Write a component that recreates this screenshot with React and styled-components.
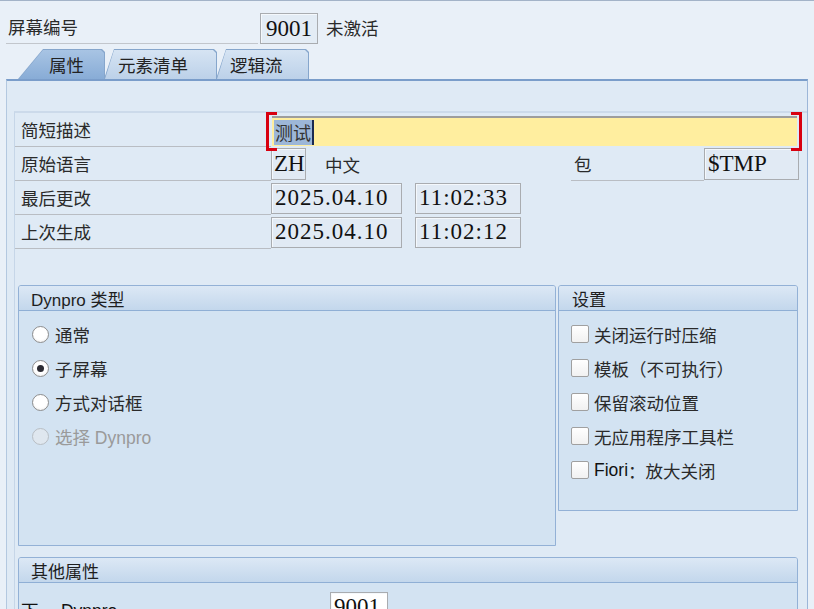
import React from "react";
import styled, { createGlobalStyle } from "styled-components";

const GlobalStyle = createGlobalStyle`
    body {
        margin: 0;
        background: #e9f0f8;
    }
`;

const Screen = styled.div`
    width: 814px;
    height: 609px;
    overflow: hidden;
    box-sizing: border-box;
    background: #e9f0f8;
    border-top: 1px solid #a3b3c8;
    font-family: "Liberation Sans", "Noto Sans CJK SC", sans-serif;
    font-size: 17.5px;
    color: #2a2a2a;
`;

const TopRow = styled.div`
    display: flex;
    align-items: flex-end;
    margin: 12px 0 0 6px;
    height: 31px;
`;

const TopLabel = styled.div`
    width: 250px;
    height: 30px;
    line-height: 30px;
    padding-left: 2px;
    border-bottom: 1px solid #c2c6cc;
`;

const Field = styled.div`
    box-sizing: border-box;
    height: ${(p) => p.h || 31}px;
    width: ${(p) => p.w}px;
    padding: 0 ${(p) => (p.tight ? 2 : 3)}px;
    display: flex;
    align-items: center;
    justify-content: ${(p) => (p.center ? "center" : "flex-start")};
    font-family: "Liberation Serif", serif;
    font-size: 23px;
    letter-spacing: ${(p) => (p.spaced ? "1px" : "0")};
    color: #111;
    background: ${(p) => p.bg || "#e1eaf4"};
    border: 1px solid #a9acb0;
    box-shadow: inset 1px 1px 0 #f4f8fc;
    margin-left: ${(p) => p.ml || 0}px;
    white-space: nowrap;
    overflow: hidden;
`;

const Status = styled.span`
    margin-left: 8px;
    line-height: 30px;
`;

const TabStrip = styled.div`
    display: flex;
    margin: 5px 0 0 18px;
    height: 30px;
`;

const Tab = styled.div`
    position: relative;
    width: ${(p) => p.w}px;
    margin-left: ${(p) => p.ml || 0}px;
    height: 30px;
    background: #86a6cc;
    clip-path: polygon(0 100%, ${(p) => p.slant}px 0, calc(100% - 3px) 0, 100% 3px, 100% 100%);
    z-index: ${(p) => (p.active ? 2 : 1)};
`;

const TabFace = styled.div`
    position: absolute;
    inset: 1px 1px 0 1px;
    clip-path: polygon(0 100%, ${(p) => p.slant - 1}px 0, calc(100% - 3px) 0, 100% 3px, 100% 100%);
    background: ${(p) =>
        p.active
            ? "linear-gradient(#a8c4e4, #88acd6)"
            : "linear-gradient(#d6e4f3, #bcd1e9)"};
    display: flex;
    align-items: center;
    padding-left: ${(p) => p.pad}px;
    font-size: 17.5px;
    color: #222;
`;

const Panel = styled.div`
    margin: 0 6px;
    height: 540px;
    border-top: 2px solid #7a9dca;
    border-left: 1px solid #b3c8e0;
    border-right: 1px solid #9cb6d8;
    background: #dfeaf5;
    padding: 30px 0 0 7px;
    box-sizing: border-box;
`;

const Content = styled.div`
    border-top: 2px solid #ccdaea;
    border-left: 1px solid #c6d6e8;
    height: 100%;
    padding-right: 8px;
`;

const FormRow = styled.div`
    display: grid;
    grid-template-columns: 256px 1fr;
    height: 34px;
`;

const RowLabel = styled.div`
    padding-left: 6px;
    display: flex;
    align-items: center;
    border-bottom: 1px solid #b9bdc3;
`;

const RowValue = styled.div`
    display: flex;
    align-items: center;
`;

const Required = styled.div`
    position: relative;
    flex: 1;
    height: 30px;
    margin: 2px 2px 0 1px;
    background: #ffee9f;
    border-top: 2px solid #9d9d9d;
    box-sizing: border-box;
    display: flex;
    align-items: center;
    padding-left: 2px;
`;

const Bracket = styled.span`
    position: absolute;
    top: -6px;
    bottom: -5px;
    width: 8px;
    border: 3px solid #d8000f;
    ${(p) => (p.side === "left" ? "left: -6px; border-right: none;" : "right: -5px; border-left: none;")}
`;

const Selected = styled.span`
    background: #9db7d8;
    font-family: "Noto Sans CJK SC", sans-serif;
    font-size: 18px;
    line-height: 25px;
    color: #333;
    padding: 0 1px;
    border-right: 2px solid #1a2a50;
`;

const Plain = styled.span`
    margin-left: ${(p) => p.ml || 0}px;
`;

const PackageLabel = styled.div`
    margin-left: auto;
    width: 130px;
    height: 32px;
    padding-left: 3px;
    display: flex;
    align-items: center;
    border-bottom: 1px solid #b9bdc3;
`;

const GroupRow = styled.div`
    display: flex;
    align-items: flex-start;
    gap: 2px;
    margin: 36px 0 0 3px;
`;

const Group = styled.div`
    box-sizing: border-box;
    width: ${(p) => p.w}px;
    height: ${(p) => p.h}px;
    border: 1px solid #93b1d6;
    border-radius: 3px 3px 0 0;
    background: #d3e3f2;
    margin-top: ${(p) => p.mt || 0}px;
    margin-left: ${(p) => p.ml || 0}px;
    overflow: hidden;
`;

const GroupHeader = styled.div`
    height: 24px;
    display: flex;
    align-items: center;
    padding-left: ${(p) => p.pad || 12}px;
    background: linear-gradient(#dce8f5, #c3d7ec);
    border-bottom: 1px solid #8fafd5;
    color: #1e1e1e;
    font-size: 17px;
`;

const GroupBody = styled.div`
    padding: 6px 0 0 ${(p) => p.pad}px;
`;

const Option = styled.div`
    height: 34px;
    display: flex;
    align-items: center;
    color: ${(p) => (p.disabled ? "#9a9a9a" : "#2a2a2a")};
`;

const Radio = styled.span`
    box-sizing: border-box;
    width: 17px;
    height: 17px;
    border-radius: 50%;
    border: 1px solid ${(p) => (p.disabled ? "#b8bec4" : "#8e8e8e")};
    background: ${(p) =>
        p.disabled ? "#dfe7ef" : "radial-gradient(circle at 50% 40%, #fff 55%, #e4e4e4)"};
    display: flex;
    align-items: center;
    justify-content: center;
    margin-right: 6px;
    &::after {
        content: "";
        width: 7px;
        height: 7px;
        border-radius: 50%;
        background: #2c2c34;
        display: ${(p) => (p.checked ? "block" : "none")};
    }
`;

const Check = styled.span`
    box-sizing: border-box;
    width: 18px;
    height: 18px;
    border: 1px solid #a0a0a0;
    border-radius: 2px;
    background: linear-gradient(#fff, #f1f1f1);
    margin-right: 5px;
`;

const Latin = styled.span`
    color: #111;
`;

const NextRow = styled.div`
    display: grid;
    grid-template-columns: 311px 1fr;
    align-items: start;
    padding-top: 9px;
`;

const NextLabel = styled.div`
    padding: 5px 0 0 2px;
    color: #111;
`;

export default function App() {
    return (
        <Screen>
            <GlobalStyle />
            <TopRow>
                <TopLabel>屏幕编号</TopLabel>
                <Field w={58} h={31} ml={2} bg="#e3ecf5" center>9001</Field>
                <Status>未激活</Status>
            </TopRow>

            <TabStrip>
                <Tab w={87} slant={25} active>
                    <TabFace slant={25} pad={30} active>属性</TabFace>
                </Tab>
                <Tab w={113} slant={10} ml={-1}>
                    <TabFace slant={10} pad={13}>元素清单</TabFace>
                </Tab>
                <Tab w={93} slant={10} ml={-1}>
                    <TabFace slant={10} pad={13}>逻辑流</TabFace>
                </Tab>
            </TabStrip>

            <Panel>
                <Content>
                    <FormRow>
                        <RowLabel>简短描述</RowLabel>
                        <RowValue>
                            <Required>
                                <Bracket side="left" />
                                <Bracket side="right" />
                                <Selected>测试</Selected>
                            </Required>
                        </RowValue>
                    </FormRow>
                    <FormRow>
                        <RowLabel>原始语言</RowLabel>
                        <RowValue>
                            <Field w={35} h={32} tight>ZH</Field>
                            <Plain ml={19}>中文</Plain>
                            <PackageLabel>包</PackageLabel>
                            <Field w={95} h={32}>$TMP</Field>
                        </RowValue>
                    </FormRow>
                    <FormRow>
                        <RowLabel>最后更改</RowLabel>
                        <RowValue>
                            <Field w={131} spaced>2025.04.10</Field>
                            <Field w={106} ml={13} spaced>11:02:33</Field>
                        </RowValue>
                    </FormRow>
                    <FormRow>
                        <RowLabel>上次生成</RowLabel>
                        <RowValue>
                            <Field w={131} spaced>2025.04.10</Field>
                            <Field w={106} ml={13} spaced>11:02:12</Field>
                        </RowValue>
                    </FormRow>

                    <GroupRow>
                        <Group w={538} h={261}>
                            <GroupHeader pad={12}>Dynpro 类型</GroupHeader>
                            <GroupBody pad={13}>
                                <Option><Radio />通常</Option>
                                <Option><Radio checked />子屏幕</Option>
                                <Option><Radio />方式对话框</Option>
                                <Option disabled><Radio disabled />选择 Dynpro</Option>
                            </GroupBody>
                        </Group>
                        <Group w={240} h={226}>
                            <GroupHeader pad={13}>设置</GroupHeader>
                            <GroupBody pad={12}>
                                <Option><Check />关闭运行时压缩</Option>
                                <Option><Check />模板（不可执行）</Option>
                                <Option><Check />保留滚动位置</Option>
                                <Option><Check />无应用程序工具栏</Option>
                                <Option><Check /><Latin>Fiori</Latin>：放大关闭</Option>
                            </GroupBody>
                        </Group>
                    </GroupRow>

                    <Group w={780} h={80} mt={11} ml={3}>
                        <GroupHeader pad={12}>其他属性</GroupHeader>
                        <NextRow>
                            <NextLabel>下一 <Latin>Dynpro</Latin></NextLabel>
                            <Field w={58} h={30} bg="#fff">9001</Field>
                        </NextRow>
                    </Group>
                </Content>
            </Panel>
        </Screen>
    );
}
